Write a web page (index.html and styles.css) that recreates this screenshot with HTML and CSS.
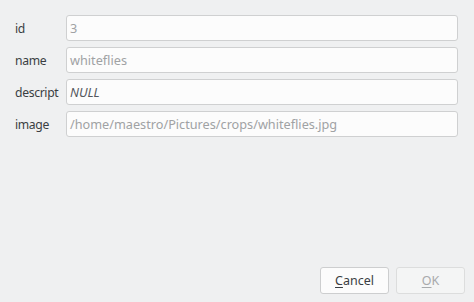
FILE: index.html
```html
<!DOCTYPE html>
<html>
<head>
<meta charset="utf-8">
<link rel="stylesheet" href="styles.css">
</head>
<body>
<div class="dialog">
  <div class="form">
    <div class="row"><span class="label">id</span><div class="field">3</div></div>
    <div class="row"><span class="label">name</span><div class="field">whiteflies</div></div>
    <div class="row"><span class="label">descript</span><div class="field null">NULL</div></div>
    <div class="row"><span class="label">image</span><div class="field">/home/maestro/Pictures/crops/whiteflies.jpg</div></div>
  </div>
  <div class="buttons">
    <div class="btn"><span class="u">C</span>ancel</div>
    <div class="btn disabled"><span class="u">O</span>K</div>
  </div>
</div>
</body>
</html>
```
FILE: styles.css
```css
html, body {
  margin: 0;
  padding: 0;
  background: #eff0f1;
}
.dialog {
  width: 474px;
  height: 302px;
  box-sizing: border-box;
  padding: 15px 9px 8px 15px;
  display: flex;
  flex-direction: column;
  font-family: "Noto Sans", "DejaVu Sans", sans-serif;
  font-size: 12.5px;
  color: #31363b;
}
.form {
  display: flex;
  flex-direction: column;
  gap: 6px;
  padding-right: 7px;
}
.row {
  display: flex;
  align-items: center;
}
.label {
  width: 51px;
  flex: none;
  font-size: 12.2px;
  letter-spacing: -0.35px;
  color: #3a3e42;
}
.field {
  flex: 1;
  height: 26px;
  box-sizing: border-box;
  border: 1px solid #cfd0d1;
  border-radius: 3px;
  background: #fcfcfc;
  color: #a0a2a4;
  padding: 0 3px;
  font-size: 12.7px;
  line-height: 24px;
  white-space: nowrap;
  overflow: hidden;
}
.field.null {
  font-style: italic;
  color: #54585c;
}
.buttons {
  margin-top: auto;
  display: flex;
  justify-content: flex-end;
  gap: 7px;
}
.btn {
  width: 69px;
  height: 27px;
  box-sizing: border-box;
  border: 1px solid #cdcecf;
  border-radius: 3px;
  background: #fcfcfc;
  text-align: center;
  line-height: 25px;
  color: #3a3e42;
}
.btn.disabled {
  color: #a8aaac;
  border-color: #dcdddd;
  background: #f4f5f5;
}
.u {
  text-decoration: underline;
  text-underline-offset: 2px;
}
```
